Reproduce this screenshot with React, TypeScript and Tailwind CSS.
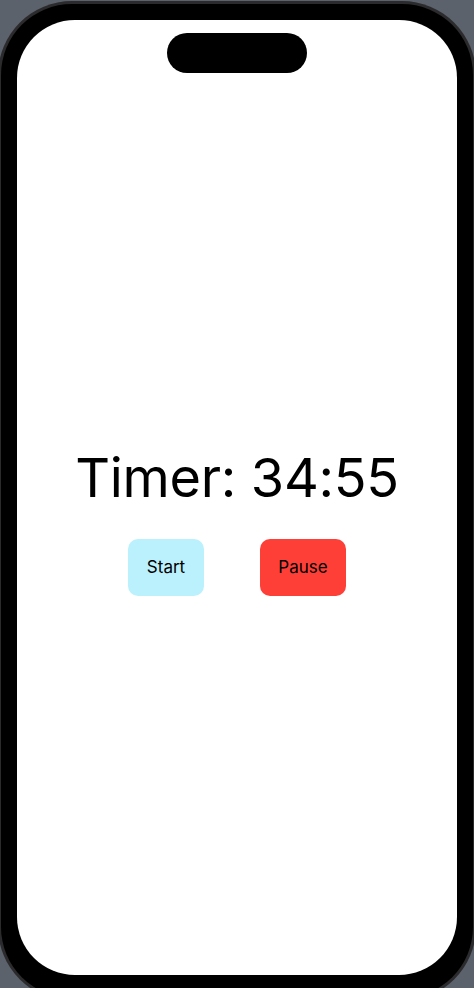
export default function App() {
  return (
    <div className="w-[474px] h-[988px] overflow-hidden bg-[#5c626b]" style={{ fontFamily: 'Inter, "Noto Sans", sans-serif' }}>
      <div className="-ml-[2px] mt-[1px] w-[478px] h-[1000px] rounded-[74px] bg-[#2b2b2d] p-[3px]">
        <div className="w-full h-full rounded-[71px] bg-black pl-[16px] pt-[16px]">
          <div className="w-[440px] h-[955px] rounded-[58px] bg-white flex flex-col items-center">
            <div className="mt-[13px] w-[140px] h-[40px] rounded-full bg-black" />
            <h1 className="mt-[378px] text-[54px] leading-none font-normal text-black tracking-[-0.3px]">Timer: 34:55</h1>
            <div className="mt-[34px] flex gap-[56px]">
              <button className="w-[76px] h-[57px] rounded-[10px] bg-[#bbf1fc] text-[17px] text-black">Start</button>
              <button className="w-[86px] h-[57px] rounded-[10px] bg-[#fe3f38] text-[17px] text-black">Pause</button>
            </div>
          </div>
        </div>
      </div>
    </div>
  );
}
